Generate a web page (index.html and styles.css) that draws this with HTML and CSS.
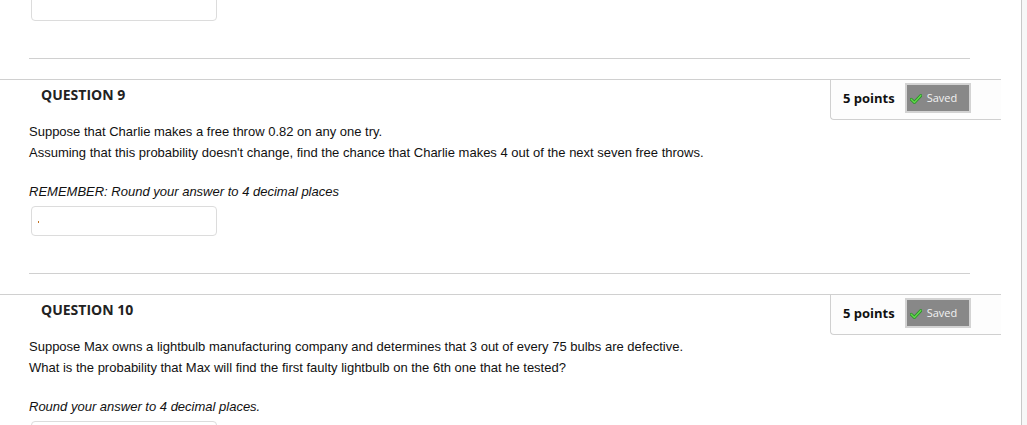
FILE: index.html
```html
<!DOCTYPE html>
<html>
<head>
<meta charset="utf-8">
<link rel="stylesheet" href="styles.css">
</head>
<body>
<div class="page">
  <div class="q-tail">
    <div class="answer answer-top"></div>
    <hr class="sep">
  </div>

  <section class="question">
    <div class="q-header">
      <h3 class="q-title">QUESTION 9</h3>
      <div class="points-box">
        <span class="points">5 points</span>
        <span class="saved">
          <svg class="check" width="12" height="10" viewBox="0 0 12 10"><path d="M1.2 5.3 L4.4 8.4 L10.8 1.6" fill="none" stroke="#2a8f2a" stroke-width="3" stroke-linecap="round" stroke-linejoin="round"/><path d="M1.2 5.3 L4.4 8.4 L10.8 1.6" fill="none" stroke="#62d84a" stroke-width="1.4" stroke-linecap="round" stroke-linejoin="round"/></svg>
          Saved
        </span>
      </div>
    </div>
    <div class="q-body">
      <p class="q-text">Suppose that Charlie makes a free throw 0.82 on any one try.<br>Assuming that this probability doesn't change, find the chance that Charlie makes 4 out of the next seven free throws.</p>
      <p class="q-note">REMEMBER: Round your answer to 4 decimal places</p>
      <div class="answer"><span class="caret"></span></div>
    </div>
    <hr class="sep">
  </section>

  <section class="question">
    <div class="q-header">
      <h3 class="q-title">QUESTION 10</h3>
      <div class="points-box">
        <span class="points">5 points</span>
        <span class="saved">
          <svg class="check" width="12" height="10" viewBox="0 0 12 10"><path d="M1.2 5.3 L4.4 8.4 L10.8 1.6" fill="none" stroke="#2a8f2a" stroke-width="3" stroke-linecap="round" stroke-linejoin="round"/><path d="M1.2 5.3 L4.4 8.4 L10.8 1.6" fill="none" stroke="#62d84a" stroke-width="1.4" stroke-linecap="round" stroke-linejoin="round"/></svg>
          Saved
        </span>
      </div>
    </div>
    <div class="q-body">
      <p class="q-text">Suppose Max owns a lightbulb manufacturing company and determines that 3 out of every 75 bulbs are defective.<br>What is the probability that Max will find the first faulty lightbulb on the 6th one that he tested?</p>
      <p class="q-note">Round your answer to 4 decimal places.</p>
      <div class="answer"></div>
    </div>
    <hr class="sep">
  </section>
</div>
</body>
</html>
```

FILE: styles.css
```css
html, body {
  margin: 0;
  padding: 0;
}
body {
  background: #f7f7f7;
  overflow: hidden;
  height: 425px;
}
.page {
  width: 1021px;
  height: 425px;
  overflow: hidden;
  background: #fff;
  border-right: 1px solid #c8c8c8;
  font-family: "Liberation Sans", Arial, sans-serif;
  font-size: 13px;
  color: #111;
}
.q-tail {
  padding-left: 31px;
  margin-top: -9px;
}
.answer {
  width: 184px;
  height: 28px;
  border: 1px solid #dcdcdc;
  border-radius: 4px;
  background: #fff;
  box-sizing: content-box;
  display: flex;
  align-items: center;
}
.answer-top {
  margin: 0;
}
.caret {
  display: block;
  width: 1px;
  height: 2px;
  background: #c07020;
  margin-left: 6px;
  margin-top: 1px;
}
.sep {
  margin: 37px 51px 0 29px;
  border: 0;
  border-top: 1px solid #d0d0d0;
  height: 0;
}
.q-tail .sep {
  margin-left: -2px;
}
.question {
  margin-top: 20px;
}
.q-header {
  display: flex;
  justify-content: space-between;
  align-items: flex-start;
  border-top: 1px solid #d0d0d0;
  margin-right: 20px;
}
.q-title {
  margin: 0;
  padding: 6px 0 0 41px;
  font-family: "Open Sans", sans-serif;
  font-weight: 700;
  font-size: 14px;
  line-height: 18px;
  color: #222;
}
.points-box {
  display: flex;
  align-items: flex-start;
  gap: 10px;
  width: 128px;
  height: 36px;
  padding: 3px 30px 0 12px;
  border-left: 1px solid #d0d0d0;
  border-bottom: 1px solid #d0d0d0;
  border-bottom-left-radius: 4px;
  background: #fdfdfd;
}
.points {
  font-family: "Open Sans", sans-serif;
  font-weight: 700;
  font-size: 13px;
  line-height: 18px;
  padding-top: 6px;
  color: #111;
}
.saved {
  display: flex;
  align-items: center;
  gap: 5px;
  padding-left: 3px;
  box-sizing: border-box;
  width: 66px;
  height: 30px;
  border: 2px solid #d3d3d3;
  background: #888;
  color: #f2f2f2;
  font-family: "Open Sans", sans-serif;
  font-size: 11px;
  line-height: 14px;
}
.check {
  display: block;
  margin-top: 1px;
}
.q-body {
  padding: 1px 0 0 29px;
}
.q-text {
  margin: 0;
  line-height: 21px;
}
.q-note {
  margin: 18px 0 0;
  font-style: italic;
  line-height: 21px;
}
.q-body .answer {
  margin-top: 4px;
  margin-left: 2px;
}
```
